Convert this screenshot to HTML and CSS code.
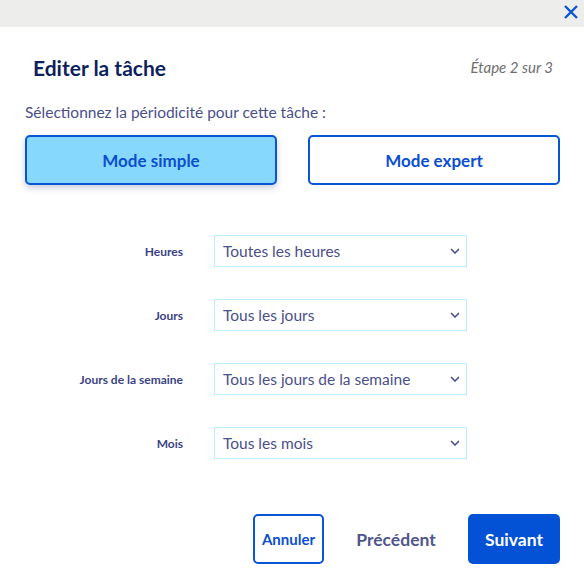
FILE: index.html
```html
<!DOCTYPE html>
<html lang="fr">
<head>
<meta charset="utf-8">
<link rel="stylesheet" href="styles.css">
</head>
<body>
<div class="topbar">
  <svg class="close" width="16" height="16" viewBox="0 0 16 16"><path d="M2 2 L14 14 M14 2 L2 14" stroke="#0a55d6" stroke-width="2.4" stroke-linecap="butt" fill="none"/></svg>
</div>
<div class="dialog">
  <div class="header">
    <h1 class="title">Editer la tâche</h1>
    <span class="step">Étape 2 sur 3</span>
  </div>
  <p class="subtitle">Sélectionnez la périodicité pour cette tâche :</p>
  <div class="modes">
    <button class="mode active">Mode simple</button>
    <button class="mode">Mode expert</button>
  </div>
  <div class="form">
    <div class="row"><label class="lbl">Heures</label><div class="select"><span>Toutes les heures</span><svg class="chev" width="10" height="6" viewBox="0 0 10 6"><path d="M1 1 L5 5 L9 1" stroke="#4c5290" stroke-width="1.6" fill="none"/></svg></div></div>
    <div class="row"><label class="lbl">Jours</label><div class="select"><span>Tous les jours</span><svg class="chev" width="10" height="6" viewBox="0 0 10 6"><path d="M1 1 L5 5 L9 1" stroke="#4c5290" stroke-width="1.6" fill="none"/></svg></div></div>
    <div class="row"><label class="lbl">Jours de la semaine</label><div class="select"><span>Tous les jours de la semaine</span><svg class="chev" width="10" height="6" viewBox="0 0 10 6"><path d="M1 1 L5 5 L9 1" stroke="#4c5290" stroke-width="1.6" fill="none"/></svg></div></div>
    <div class="row"><label class="lbl">Mois</label><div class="select"><span>Tous les mois</span><svg class="chev" width="10" height="6" viewBox="0 0 10 6"><path d="M1 1 L5 5 L9 1" stroke="#4c5290" stroke-width="1.6" fill="none"/></svg></div></div>
  </div>
  <div class="footer">
    <button class="btn outline">Annuler</button>
    <button class="btn ghost">Précédent</button>
    <button class="btn primary">Suivant</button>
  </div>
</div>
</body>
</html>
```
FILE: styles.css
```css
* { box-sizing: border-box; }
html, body { margin: 0; padding: 0; background: #fff; }
body { font-family: Lato, "Open Sans", sans-serif; width: 584px; height: 583px; overflow: hidden; }
.topbar { height: 27px; background: #edeeec; display: flex; justify-content: flex-end; align-items: flex-start; padding: 4px 5px 0 0; }
.close { display: block; }
.dialog { padding: 0 3px 0 25px; }
.header { display: flex; justify-content: space-between; align-items: center; margin-top: 28px; padding-left: 8px; padding-right: 28px; height: 24px; }
.title { margin: 0; font-size: 21px; font-weight: 700; color: #0d1f5c; }
.step { font-size: 15px; font-style: italic; color: #6e6e6e; }
.subtitle { margin: 24px 0 0; font-size: 15.5px; color: #4a4f8b; line-height: 18px; }
.modes { display: flex; gap: 31px; margin-top: 14px; width: 536px; }
.mode { width: 252px; height: 50px; border: 2px solid #0a55d6; border-radius: 5px; background: #fff; color: #0b4fcf; font-family: inherit; font-size: 17px; font-weight: 700; }
.mode.active { background: #87d8fd; box-shadow: 0 3px 6px rgba(40, 60, 120, 0.25); }
.form { margin-top: 50px; display: flex; flex-direction: column; gap: 32px; }
.row { display: flex; align-items: center; height: 32px; }
.lbl { width: 158px; text-align: right; font-size: 12px; font-weight: 700; color: #3c4385; }
.select { margin-left: 31px; width: 253px; height: 32px; border: 1px solid #b8effb; display: flex; align-items: center; justify-content: space-between; padding: 0 6px 0 8px; font-size: 15.5px; color: #4a4f8b; }
.chev { display: block; }
.footer { display: flex; justify-content: flex-end; align-items: center; margin-top: 55px; padding-right: 21px; }
.btn { font-family: inherit; font-weight: 700; height: 50px; border-radius: 5px; cursor: pointer; padding: 0; }
.outline { width: 71px; border: 2px solid #0a55d6; background: #fff; color: #0b4fcf; font-size: 15px; }
.ghost { width: 144px; border: none; background: transparent; color: #50558b; font-size: 17.5px; }
.primary { width: 92px; border: none; background: #0352d6; color: #fff; font-size: 17.5px; }
```
